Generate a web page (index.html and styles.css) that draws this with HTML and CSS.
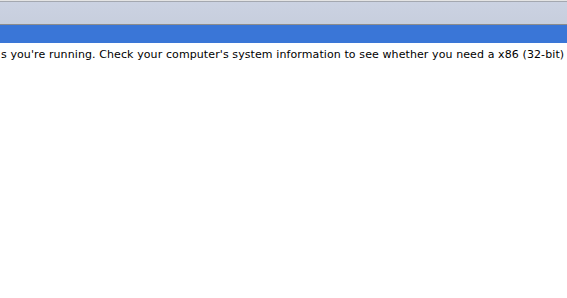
FILE: index.html
```html
<!DOCTYPE html>
<html lang="en">

<head>
    <meta charset="UTF-8">
    <meta name="viewport" content="width=device-width, initial-scale=1.0">
    <title>Download</title>
    <link rel="stylesheet" href="styles.css">
</head>

<body>
    <div class="toolbar"></div>
    <div class="titlebar"></div>
    <div class="content">
        <p class="info">s you're running. Check your computer's system information to see whether you need a x86 (32-bit) o</p>
    </div>
</body>

</html>
```

FILE: styles.css
```css
body {
    margin: 0;
    background-color: #fff;
    font-family: 'DejaVu Sans', sans-serif;
    overflow: hidden;
}

.toolbar {
    height: 23px;
    border-top: 1px solid #e4e4e4;
    border-bottom: 1px solid #8c8c8c;
    background: linear-gradient(#a4a8b0 0, #a4a8b0 1px, #cbd2e2 1px, #c7cedd 100%);
}

.titlebar {
    height: 18px;
    background-color: #3a76d7;
}

.content {
    padding: 5px 0 0 1px;
    overflow: hidden;
}

.info {
    margin: 0;
    font-size: 11px;
    letter-spacing: 0.1px;
    color: #000;
    white-space: nowrap;
}
```
